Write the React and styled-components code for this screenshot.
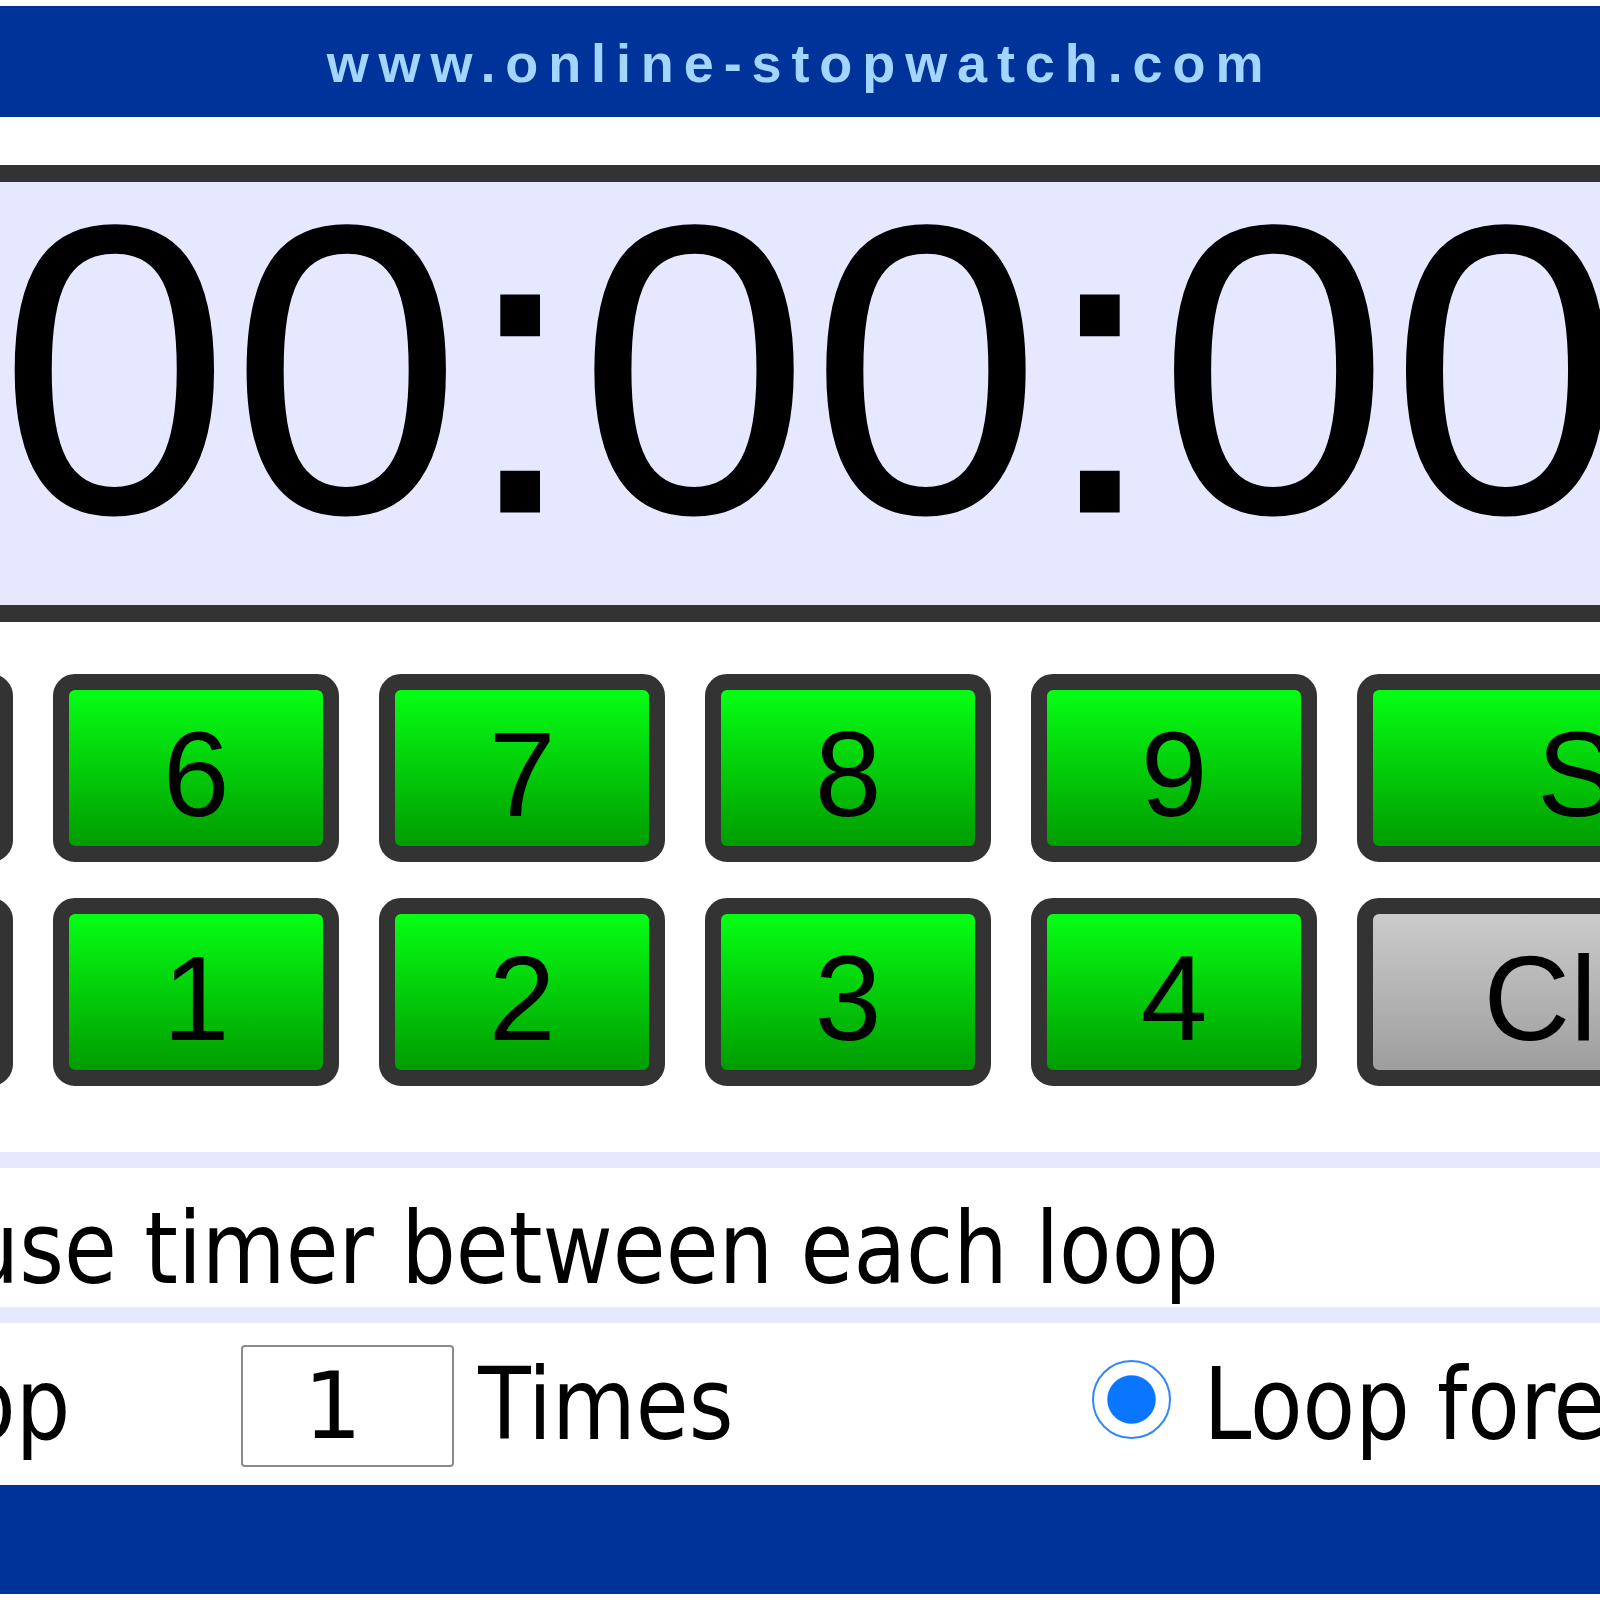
import React from "react";
import styled, { createGlobalStyle } from "styled-components";

const GlobalStyle = createGlobalStyle`
  html, body {
    margin: 0;
    padding: 0;
    background: #ffffff;
  }
  body {
    overflow: hidden;
  }
`;

const Page = styled.div`
  width: 1600px;
  height: 1600px;
  box-sizing: border-box;
  padding-top: 6px;
  overflow: hidden;
  background: #ffffff;
  font-family: "Liberation Sans", Arial, sans-serif;
`;

/* Blue site banner */
const SiteBar = styled.header`
  height: 107px;
  padding-top: 4px;
  background: #003399;
  display: flex;
  justify-content: center;
`;

const SiteName = styled.span`
  font-family: "Liberation Sans", Arial, sans-serif;
  font-weight: 700;
  font-size: 54px;
  line-height: 107px;
  letter-spacing: 9.9px;
  color: #a2d5ff;
  white-space: nowrap;
`;

/* Time readout */
const Display = styled.section`
  margin-top: 48px;
  height: 375px;
  padding: 0 0 48px 20px;
  border-top: 17px solid #333333;
  border-bottom: 17px solid #333333;
  background: #e6e8ff;
  display: flex;
  justify-content: center;
  align-items: center;
`;

const Readout = styled.span`
  display: inline-block;
  font-family: "Liberation Sans", Arial, sans-serif;
  font-size: 417px;
  line-height: 417px;
  color: #000000;
  white-space: nowrap;
  transform: scaleY(0.99);
`;

/* Keypad */
const Keypad = styled.div`
  margin: 52px 0 0 -273px;
  display: flex;
  flex-direction: column;
  gap: 36px;
`;

const KeyRow = styled.div`
  display: flex;
  gap: 40px;
`;

const Key = styled.button`
  flex: none;
  width: ${(p) => (p.$wide ? 540 : 286)}px;
  height: 188px;
  box-sizing: border-box;
  margin: 0;
  padding: 12px 0 0;
  border: 16px solid #333333;
  border-radius: 22px;
  background: ${(p) =>
    p.$tone === "grey"
      ? "linear-gradient(#cbcbcb, #9e9e9e)"
      : "linear-gradient(#06ff14, #009c00)"};
  font-family: "Liberation Sans", Arial, sans-serif;
  font-size: 120px;
  line-height: 1;
  color: #000000;
  display: flex;
  align-items: center;
  justify-content: center;
  cursor: pointer;
`;

const Stripe = styled.div`
  height: 16px;
  background: #e6e8ff;
  margin-top: ${(p) => p.$gap || 0}px;
`;

/* Options */
const PauseRow = styled.div`
  height: 119px;
  padding-top: 20px;
  margin-left: -136px;
  display: flex;
  align-items: center;
`;

const Label = styled.span`
  flex: none;
  display: inline-block;
  margin-left: ${(p) => p.$gap || 0}px;
  font-family: "DejaVu Sans", Verdana, sans-serif;
  font-size: 86px;
  line-height: 86px;
  color: #000000;
  white-space: nowrap;
  transform: scaleY(1.16);
`;

const LoopRow = styled.div`
  height: 162px;
  margin-left: -256px;
  display: flex;
  align-items: center;
`;

const Radio = styled.input.attrs({ type: "radio" })`
  appearance: none;
  flex: none;
  width: 79px;
  height: 79px;
  box-sizing: border-box;
  margin: 0 0 10px ${(p) => p.$gap || 0}px;
  border-radius: 50%;
  border: 2px solid ${(p) => (p.checked ? "#2f86ff" : "#767676")};
  background: ${(p) =>
    p.checked
      ? "radial-gradient(circle closest-side, #0a75ff 0 63%, #ffffff 66%)"
      : "#ffffff"};
`;

const CountInput = styled.input`
  flex: none;
  width: 213px;
  height: 122px;
  box-sizing: border-box;
  margin: 4px 0 0 ${(p) => p.$gap || 0}px;
  padding: 0 30px 0 0;
  border: 2px solid #8a8a8a;
  border-radius: 4px;
  background: #ffffff;
  font-family: "DejaVu Sans", Verdana, sans-serif;
  font-size: 92px;
  color: #000000;
  text-align: center;
  outline: none;
`;

const FootBar = styled.footer`
  height: 109px;
  background: #003399;
`;

const topKeys = ["5", "6", "7", "8", "9"];
const bottomKeys = ["0", "1", "2", "3", "4"];

export default function App() {
  return (
    <>
      <GlobalStyle />
      <Page>
        <SiteBar>
          <SiteName>www.online-stopwatch.com</SiteName>
        </SiteBar>

        <Display>
          <Readout>00:00:00</Readout>
        </Display>

        <Keypad>
          <KeyRow>
            {topKeys.map((k) => (
              <Key key={k}>{k}</Key>
            ))}
            <Key $wide>Set</Key>
          </KeyRow>
          <KeyRow>
            {bottomKeys.map((k) => (
              <Key key={k}>{k}</Key>
            ))}
            <Key $wide $tone="grey">
              Clear
            </Key>
          </KeyRow>
        </Keypad>

        <Stripe $gap={66} />
        <PauseRow>
          <Label>Pause timer between each loop</Label>
        </PauseRow>
        <Stripe />

        <LoopRow>
          <Radio name="loop" readOnly />
          <Label $gap={41}>Loop</Label>
          <CountInput $gap={171} defaultValue="1" />
          <Label $gap={24}>Times</Label>
          <Radio name="loop" $gap={358} checked readOnly />
          <Label $gap={33}>Loop forever</Label>
        </LoopRow>

        <FootBar />
      </Page>
    </>
  );
}
